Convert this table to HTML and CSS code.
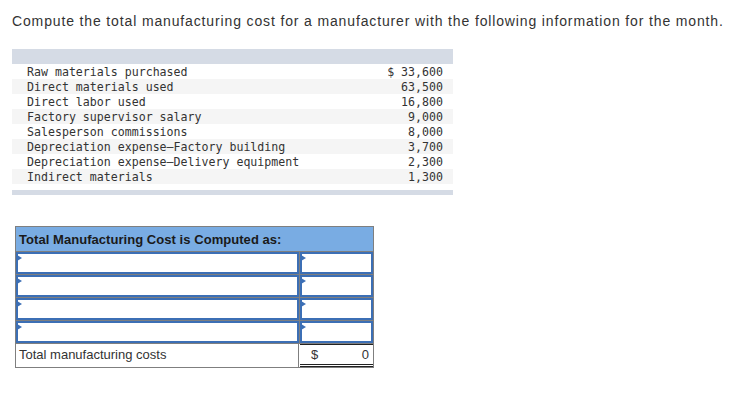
FILE: index.html
```html
<!DOCTYPE html>
<html>
<head>
<meta charset="utf-8">
<link rel="stylesheet" href="styles.css">
</head>
<body>
<p class="prompt">Compute the total manufacturing cost for a manufacturer with the following information for the month.</p>

<div class="data">
  <div class="band top"></div>
  <div class="rows">
    <div class="row"><span>Raw materials purchased</span><span>$ 33,600</span></div>
    <div class="row alt"><span>Direct materials used</span><span>63,500</span></div>
    <div class="row"><span>Direct labor used</span><span>16,800</span></div>
    <div class="row alt"><span>Factory supervisor salary</span><span>9,000</span></div>
    <div class="row"><span>Salesperson commissions</span><span>8,000</span></div>
    <div class="row alt"><span>Depreciation expense—Factory building</span><span>3,700</span></div>
    <div class="row"><span>Depreciation expense—Delivery equipment</span><span>2,300</span></div>
    <div class="row alt"><span>Indirect materials</span><span>1,300</span></div>
  </div>
  <div class="band bottom"></div>
</div>

<div class="calc">
  <div class="calc-head">Total Manufacturing Cost is Computed as:</div>
  <div class="calc-row"><div class="cell wide"><i class="mark"></i></div><div class="cell amt"><i class="mark"></i></div></div>
  <div class="calc-row"><div class="cell wide"><i class="mark"></i></div><div class="cell amt"><i class="mark"></i></div></div>
  <div class="calc-row"><div class="cell wide"><i class="mark"></i></div><div class="cell amt"><i class="mark"></i></div></div>
  <div class="calc-row"><div class="cell wide"><i class="mark"></i></div><div class="cell amt"><i class="mark"></i></div></div>
  <div class="calc-row total">
    <div class="tcell label">Total manufacturing costs</div>
    <div class="tcell sum"><span>$</span><span>0</span></div>
  </div>
</div>
</body>
</html>
```

FILE: styles.css
```css
html, body {
  margin: 0;
  padding: 0;
  background: #fff;
}

body {
  font-family: "Liberation Sans", Arial, sans-serif;
  color: #222;
}

.prompt {
  margin: 0;
  padding: 12px 0 0 12px;
  font-size: 14px;
  line-height: 18px;
  letter-spacing: 0.86px;
  color: #333;
}

.data {
  margin: 19px 0 0 12px;
  width: 441px;
}

.band {
  background: #d5dbe5;
}

.band.top {
  height: 15px;
}

.band.bottom {
  height: 5px;
  margin-top: 6px;
}

.rows {
  font-family: "DejaVu Sans Mono", "Liberation Mono", monospace;
  font-size: 11.6px;
  color: #333;
}

.row {
  display: flex;
  justify-content: space-between;
  height: 15px;
  line-height: 16px;
  padding: 0 10px 0 15px;
}

.row.alt {
  background: #f5f5f5;
}

.calc {
  margin: 31px 0 0 15px;
  width: 357px;
  border: 1px solid #7f7f7f;
  background: #7f7f7f;
  display: flex;
  flex-direction: column;
  gap: 1px;
}

.calc-head {
  background: #79ace3;
  height: 24px;
  line-height: 26px;
  padding-left: 3px;
  font-weight: bold;
  font-size: 13px;
  color: #1a1a1a;
  letter-spacing: 0.05px;
}

.calc-row {
  display: flex;
  gap: 1px;
  height: 22px;
}

.cell {
  position: relative;
  background: #fff;
  border: 2px solid #3c6fb5;
  box-sizing: border-box;
}

.cell.wide {
  flex: 1;
}

.cell.amt {
  width: 73px;
}

.mark {
  position: absolute;
  left: -1px;
  top: 1px;
  width: 0;
  height: 0;
  border-top: 3px solid transparent;
  border-bottom: 3px solid transparent;
  border-left: 5px solid #3c6fb5;
}

.calc-row.total {
  height: 23px;
  background: #fff;
}

.tcell {
  background: #fff;
  box-sizing: border-box;
  font-size: 13px;
  color: #333;
  line-height: 22px;
}

.tcell.label {
  flex: 1;
  padding-left: 3px;
  border-right: 1px solid #7f7f7f;
}

.tcell.sum {
  width: 73px;
  display: flex;
  justify-content: space-between;
  padding: 0 4px 0 11px;
  border-top: 1px solid #222;
  border-bottom: 3px double #222;
  line-height: 20px;
}
```
